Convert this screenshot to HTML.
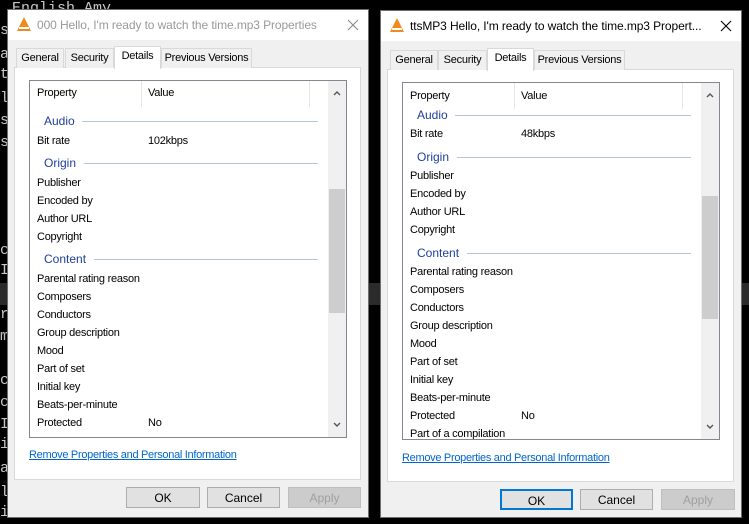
<!DOCTYPE html>
<html><head><meta charset="utf-8"><style>
*{margin:0;padding:0;box-sizing:border-box}
body{width:749px;height:524px;background:#000;position:relative;overflow:hidden;font-family:"Liberation Sans",sans-serif;font-size:11px;letter-spacing:-0.25px;color:#000}
.a{position:absolute;white-space:nowrap}
.term{position:absolute;left:0;font-family:"Liberation Mono",monospace;font-size:15px;color:#c8c8c8;letter-spacing:0}
.dlg{position:absolute;background:#f0f0f0;border:1px solid #6e6e6e}
.title{position:absolute;left:0;top:0;right:0;height:30px;background:#fff;font-size:12px;letter-spacing:-0.1px;color:#999}
.tab{position:absolute;height:20px;background:#f0f0f0;border:1px solid #d9d9d9;border-bottom:none;font-size:11px;padding:3px 0 0 0;text-align:center;color:#000;white-space:nowrap}
.tab.sel{background:#fff;height:23px;z-index:2}
.panel{position:absolute;background:#fff;border:1px solid #d9d9d9}
.list{position:absolute;background:#fff;border:1px solid #828790;overflow:hidden}
.grp{color:#1e3f9a;font-size:12px;letter-spacing:0}
.line{position:absolute;height:1px;background:#b7c5dc}
.sb{position:absolute;background:#f0f0f0}
.thumb{position:absolute;background:#cdcdcd}
.btn{position:absolute;height:21px;background:#e1e1e1;border:1px solid #adadad;text-align:center;font-size:12px;padding-top:3px;letter-spacing:0}
.link{color:#0066cc;text-decoration:underline;font-size:11px;letter-spacing:-0.3px}
.cone{position:absolute;width:0;height:0;border-left:7px solid transparent;border-right:7px solid transparent;border-bottom:14px solid #f08a1c}
</style></head><body>
<div class="term" style="top:0;left:12px">English Amy</div>
<div class="term" style="top:22px">s</div><div class="term" style="top:46px">a</div><div class="term" style="top:66px">t</div><div class="term" style="top:90px">l</div><div class="term" style="top:112px">s</div><div class="term" style="top:134px">s</div>
<div class="term" style="top:242px">c</div><div class="term" style="top:262px">I</div><div class="term" style="top:284px">I</div><div class="term" style="top:306px">r</div><div class="term" style="top:328px">m</div>
<div class="term" style="top:372px">c</div><div class="term" style="top:394px">c</div><div class="term" style="top:416px">I</div><div class="term" style="top:436px">i</div><div class="term" style="top:460px">a</div><div class="term" style="top:484px">l</div><div class="term" style="top:504px">ian Blanca</div>
<div style="position:absolute;left:0;top:283px;width:749px;height:22px;background:#2b2b2b"></div>

<!-- LEFT -->
<div class="dlg" style="left:7px;top:9px;width:362px;height:509px">
 <div class="title"><div class="cone" style="left:9px;top:7px"></div><div style="position:absolute;left:11px;top:17px;width:10px;height:2px;background:#fff"></div><span class="a" style="left:29px;top:8px">000 Hello, I'm ready to watch the time.mp3 Properties</span>
 <svg style="position:absolute;left:339px;top:9px" width="12" height="12"><path d="M1 1L11 11M11 1L1 11" stroke="#888" stroke-width="1.1"/></svg></div>
 <div class="panel" style="left:6px;top:57px;width:347px;height:413px"></div>
 <div class="tab" style="left:8px;top:38px;width:48px">General</div>
 <div class="tab" style="left:57px;top:38px;width:49px">Security</div>
 <div class="tab sel" style="left:106px;top:36px;width:47px">Details</div>
 <div class="tab" style="left:153px;top:38px;width:91px">Previous Versions</div>
 <div class="list" style="left:21px;top:70px;width:318px;height:358px">
  <div style="position:absolute;left:111px;top:0;width:1px;height:26px;background:#e5e5e5"></div>
  <div style="position:absolute;left:279px;top:0;width:1px;height:26px;background:#e5e5e5"></div>
  <div class="sb" style="left:298px;top:0;width:18px;height:356px"></div>
  <div class="thumb" style="left:299px;top:108px;width:16px;height:124px"></div>
  <svg style="position:absolute;left:303px;top:9px" width="8" height="6"><path d="M1 5L4 2L7 5" stroke="#555" stroke-width="1.4" fill="none"/></svg>
  <svg style="position:absolute;left:303px;top:341px" width="8" height="6"><path d="M1 1L4 4L7 1" stroke="#555" stroke-width="1.4" fill="none"/></svg>
  <span class="a" style="left:7px;top:6px">Property</span><span class="a" style="left:118px;top:6px">Value</span>
  <span class="a grp" style="left:14px;top:33px">Audio</span><div class="line" style="left:52px;top:40px;width:236px"></div>
  <span class="a" style="left:7px;top:54px">Bit rate</span><span class="a" style="left:118px;top:54px">102kbps</span>
  <span class="a grp" style="left:14px;top:75px">Origin</span><div class="line" style="left:54px;top:82px;width:234px"></div>
  <span class="a" style="left:7px;top:96px">Publisher</span>
  <span class="a" style="left:7px;top:114px">Encoded by</span>
  <span class="a" style="left:7px;top:132px">Author URL</span>
  <span class="a" style="left:7px;top:150px">Copyright</span>
  <span class="a grp" style="left:14px;top:171px">Content</span><div class="line" style="left:64px;top:178px;width:224px"></div>
  <span class="a" style="left:7px;top:192px">Parental rating reason</span>
  <span class="a" style="left:7px;top:210px">Composers</span>
  <span class="a" style="left:7px;top:228px">Conductors</span>
  <span class="a" style="left:7px;top:246px">Group description</span>
  <span class="a" style="left:7px;top:264px">Mood</span>
  <span class="a" style="left:7px;top:282px">Part of set</span>
  <span class="a" style="left:7px;top:300px">Initial key</span>
  <span class="a" style="left:7px;top:318px">Beats-per-minute</span>
  <span class="a" style="left:7px;top:336px">Protected</span><span class="a" style="left:118px;top:336px">No</span>
 </div>
 <span class="a link" style="left:21px;top:439px">Remove Properties and Personal Information</span>
 <div class="btn" style="left:118px;top:477px;width:74px">OK</div>
 <div class="btn" style="left:199px;top:477px;width:73px">Cancel</div>
 <div class="btn" style="left:280px;top:477px;width:73px;color:#a0a0a0;background:#cccccc;border-color:#bfbfbf">Apply</div>
</div>

<!-- RIGHT -->
<div class="dlg" style="left:380px;top:10px;width:362px;height:508px">
 <div class="title"><div class="cone" style="left:9px;top:7px"></div><div style="position:absolute;left:11px;top:17px;width:10px;height:2px;background:#fff"></div><span class="a" style="left:29px;top:8px;color:#000">ttsMP3 Hello, I'm ready to watch the time.mp3 Propert...</span>
 <svg style="position:absolute;left:339px;top:9px" width="12" height="12"><path d="M1 1L11 11M11 1L1 11" stroke="#000" stroke-width="1.1"/></svg></div>
 <div class="panel" style="left:6px;top:58px;width:347px;height:413px"></div>
 <div class="tab" style="left:9px;top:39px;width:48px">General</div>
 <div class="tab" style="left:57px;top:39px;width:49px">Security</div>
 <div class="tab sel" style="left:106px;top:37px;width:47px">Details</div>
 <div class="tab" style="left:153px;top:39px;width:91px">Previous Versions</div>
 <div class="list" style="left:21px;top:71px;width:318px;height:358px">
  <div style="position:absolute;left:111px;top:0;width:1px;height:26px;background:#e5e5e5"></div>
  <div style="position:absolute;left:279px;top:0;width:1px;height:26px;background:#e5e5e5"></div>
  <div class="sb" style="left:298px;top:0;width:18px;height:356px"></div>
  <div class="thumb" style="left:299px;top:113px;width:16px;height:123px"></div>
  <svg style="position:absolute;left:303px;top:9px" width="8" height="6"><path d="M1 5L4 2L7 5" stroke="#555" stroke-width="1.4" fill="none"/></svg>
  <svg style="position:absolute;left:303px;top:341px" width="8" height="6"><path d="M1 1L4 4L7 1" stroke="#555" stroke-width="1.4" fill="none"/></svg>
  <span class="a" style="left:7px;top:7px">Property</span><span class="a" style="left:118px;top:7px">Value</span>
  <span class="a grp" style="left:14px;top:25px">Audio</span><div class="line" style="left:52px;top:32px;width:236px"></div>
  <span class="a" style="left:7px;top:45px">Bit rate</span><span class="a" style="left:118px;top:45px">48kbps</span>
  <span class="a grp" style="left:14px;top:67px">Origin</span><div class="line" style="left:54px;top:74px;width:234px"></div>
  <span class="a" style="left:7px;top:87px">Publisher</span>
  <span class="a" style="left:7px;top:105px">Encoded by</span>
  <span class="a" style="left:7px;top:123px">Author URL</span>
  <span class="a" style="left:7px;top:141px">Copyright</span>
  <span class="a grp" style="left:14px;top:163px">Content</span><div class="line" style="left:64px;top:170px;width:224px"></div>
  <span class="a" style="left:7px;top:183px">Parental rating reason</span>
  <span class="a" style="left:7px;top:201px">Composers</span>
  <span class="a" style="left:7px;top:219px">Conductors</span>
  <span class="a" style="left:7px;top:237px">Group description</span>
  <span class="a" style="left:7px;top:255px">Mood</span>
  <span class="a" style="left:7px;top:273px">Part of set</span>
  <span class="a" style="left:7px;top:291px">Initial key</span>
  <span class="a" style="left:7px;top:309px">Beats-per-minute</span>
  <span class="a" style="left:7px;top:327px">Protected</span><span class="a" style="left:118px;top:327px">No</span>
  <span class="a" style="left:7px;top:345px">Part of a compilation</span>
 </div>
 <span class="a link" style="left:21px;top:441px">Remove Properties and Personal Information</span>
 <div class="btn" style="left:119px;top:478px;width:73px;border:2px solid #0078d7">OK</div>
 <div class="btn" style="left:199px;top:478px;width:73px">Cancel</div>
 <div class="btn" style="left:280px;top:478px;width:74px;color:#a0a0a0;background:#cccccc;border-color:#bfbfbf">Apply</div>
</div>
</body></html>
